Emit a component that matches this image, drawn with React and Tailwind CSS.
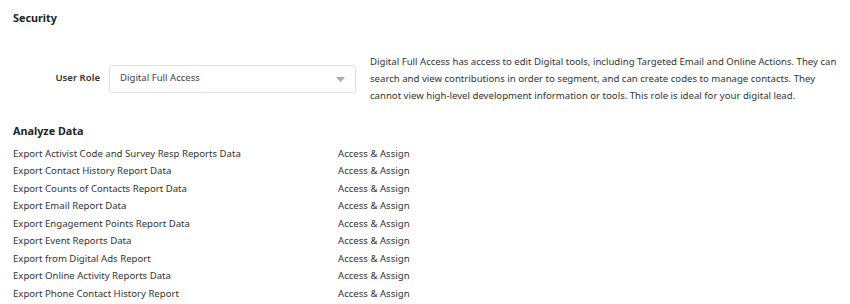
const rows = [
  'Export Activist Code and Survey Resp Reports Data',
  'Export Contact History Report Data',
  'Export Counts of Contacts Report Data',
  'Export Email Report Data',
  'Export Engagement Points Report Data',
  'Export Event Reports Data',
  'Export from Digital Ads Report',
  'Export Online Activity Reports Data',
  'Export Phone Contact History Report',
];

export default function App() {
  return (
    <div className="w-[850px] h-[304px] overflow-hidden bg-white text-[#333] font-['Noto_Sans',sans-serif] text-[9.6px] pl-[13px] pt-[9px]">
      <h2 className="text-[10.8px] font-bold text-[#222] leading-[18px]">Security</h2>

      <div className="flex items-center mt-[26px]">
        <div className="w-[87px] text-right font-semibold text-[#333]">User Role</div>
        <div className="ml-[9px] w-[247px] h-[28px] border border-[#e2e2e2] rounded-[3px] flex items-center justify-between pl-[10px] pr-[10px]">
          <span className="text-[#444]">Digital Full Access</span>
          <svg width="9" height="5" viewBox="0 0 9 5" className="mt-[1px]">
            <path d="M0 0h9L4.5 5z" fill="#aaa" />
          </svg>
        </div>
        <p className="ml-[14px] w-[472px] leading-[17px] text-[#333]">
          Digital Full Access has access to edit Digital tools, including Targeted Email and Online Actions. They can search and view contributions in order to segment, and can create codes to manage contacts. They cannot view high-level development information or tools. This role is ideal for your digital lead.
        </p>
      </div>

      <h2 className="mt-[18px] text-[10.8px] font-bold text-[#222] leading-[18px]">Analyze Data</h2>
      <div className="mt-[5px]">
        {rows.map((r) => (
          <div key={r} className="flex h-[17.5px] items-center">
            <span className="w-[325px]">{r}</span>
            <span>Access &amp; Assign</span>
          </div>
        ))}
      </div>
    </div>
  );
}
